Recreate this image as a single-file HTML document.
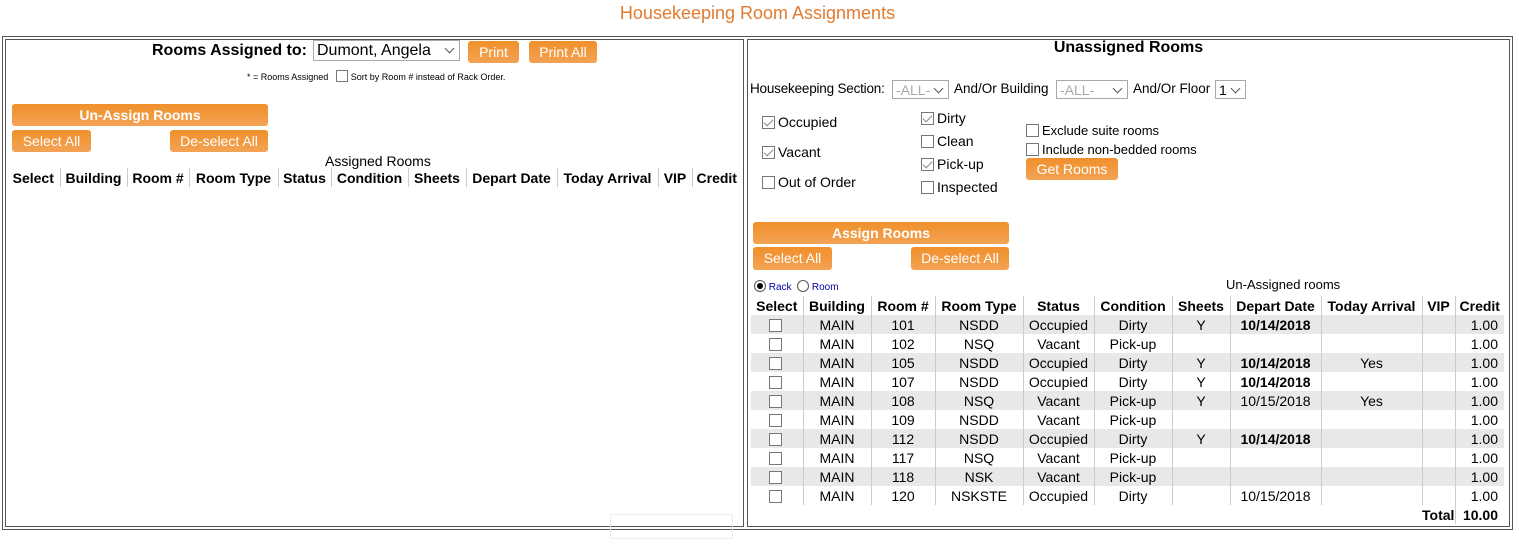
<!DOCTYPE html>
<html><head><meta charset="utf-8"><style>
*{box-sizing:border-box}
body{margin:0;width:1519px;height:545px;background:#fff;font-family:"Liberation Sans",Arial,sans-serif;font-size:14px;color:#000;position:relative;overflow:hidden}
.a{position:absolute;white-space:nowrap}
.btn{position:absolute;background:linear-gradient(#f0902a,#f3a255);color:#fff;border-radius:3px;text-align:center;font-size:14px;line-height:22px}
.sel{position:absolute;border:1px solid #a9a9a9;background:#fff;font-size:14px;padding-left:3px;line-height:18px}
.sel:after{content:"";position:absolute;right:6px;top:4px;width:6px;height:6px;border-right:1px solid #555;border-bottom:1px solid #555;transform:rotate(45deg)}
.cb{display:inline-block;width:13px;height:13px;border:1px solid #777;vertical-align:-2px;margin-right:3px;background:#fff;position:relative}
.cb.k:after{content:"";position:absolute;left:3px;top:0px;width:4px;height:8px;border-right:1px solid #888;border-bottom:1px solid #888;transform:rotate(45deg)}
table{border-collapse:collapse;position:absolute;table-layout:fixed}
td,th{padding:0;text-align:center;height:19px;font-size:14px;border-left:1px solid #ccc;white-space:nowrap}
td:first-child,th:first-child{border-left:none}
tr.g td{background:#e8e8e8}
.r{text-align:right;padding-right:6px}
</style></head><body>
<div class="a" style="left:0;width:1515px;top:3px;text-align:center;color:#e07b2f;font-size:18px">Housekeeping Room Assignments</div>
<div class="a" style="left:2px;top:36px;width:1511px;height:494px;border:1px solid #555"></div>
<div class="a" style="left:5px;top:39px;width:739px;height:488px;border:1px solid #555"></div>
<div class="a" style="left:747px;top:39px;width:763px;height:488px;border:1px solid #555"></div>

<div class="a" style="left:152px;top:42px;font-size:16px;font-weight:bold">Rooms Assigned to:</div>
<div class="sel" style="left:313px;top:40px;width:147px;height:21px;font-size:16px;line-height:19px">Dumont, Angela</div>
<div class="btn" style="left:468px;top:41px;width:51px">Print</div>
<div class="btn" style="left:529px;top:41px;width:68px">Print All</div>
<div class="a" style="left:247px;top:70px;font-size:9px">* = Rooms Assigned &nbsp;&nbsp;<span class="cb" style="width:12px;height:12px"></span>Sort by Room # instead of Rack Order.</div>
<div class="btn" style="left:12px;top:104px;width:256px;font-weight:bold">Un-Assign Rooms</div>
<div class="btn" style="left:12px;top:130px;width:79px">Select All</div>
<div class="btn" style="left:170px;top:130px;width:98px">De-select All</div>
<div class="a" style="left:325px;top:153px">Assigned Rooms</div>
<table style="left:7px;top:168px;width:734px;font-weight:bold"><tr>
<th style="width:53px">Select</th><th style="width:67px">Building</th><th style="width:62px">Room #</th><th style="width:89px">Room Type</th><th style="width:53px">Status</th><th style="width:77px">Condition</th><th style="width:58px">Sheets</th><th style="width:91px">Depart Date</th><th style="width:101px">Today Arrival</th><th style="width:34px">VIP</th><th style="width:49px">Credit</th></tr></table>
<div class="a" style="left:610px;top:514px;width:123px;height:25px;border:1px solid #eee"></div>

<div class="a" style="left:747px;top:38px;width:763px;text-align:center;font-size:16px;font-weight:bold;line-height:20px">Unassigned Rooms</div>
<div class="a" style="left:750px;top:81px;font-size:13.5px;letter-spacing:-0.2px">Housekeeping Section:</div>
<div class="sel" style="left:892px;top:80px;width:57px;height:19px;color:#aaa">-ALL-</div>
<div class="a" style="left:954px;top:81px;font-size:13.5px">And/Or Building</div>
<div class="sel" style="left:1056px;top:80px;width:72px;height:19px;color:#aaa">-ALL-</div>
<div class="a" style="left:1133px;top:81px;font-size:13.5px">And/Or Floor</div>
<div class="sel" style="left:1215px;top:80px;width:31px;height:19px">1</div>
<div class="a" style="left:762px;top:114px"><span class="cb k"></span>Occupied</div>
<div class="a" style="left:762px;top:144px"><span class="cb k"></span>Vacant</div>
<div class="a" style="left:762px;top:174px"><span class="cb"></span>Out of Order</div>
<div class="a" style="left:921px;top:110px"><span class="cb k"></span>Dirty</div>
<div class="a" style="left:921px;top:133px"><span class="cb"></span>Clean</div>
<div class="a" style="left:921px;top:156px"><span class="cb k"></span>Pick-up</div>
<div class="a" style="left:921px;top:179px"><span class="cb"></span>Inspected</div>
<div class="a" style="left:1026px;top:123px;font-size:13px"><span class="cb"></span>Exclude suite rooms</div>
<div class="a" style="left:1026px;top:142px;font-size:13px"><span class="cb"></span>Include non-bedded rooms</div>
<div class="btn" style="left:1026px;top:158px;width:92px">Get Rooms</div>
<div class="btn" style="left:753px;top:222px;width:256px;font-weight:bold">Assign Rooms</div>
<div class="btn" style="left:753px;top:247px;width:79px;height:23px">Select All</div>
<div class="btn" style="left:911px;top:247px;width:98px;height:23px">De-select All</div>
<div class="a" style="left:754px;top:280px;font-size:10px;color:#00a"><span style="display:inline-block;width:12px;height:12px;border:1px solid #555;border-radius:50%;vertical-align:-2px;position:relative"><span style="position:absolute;left:2px;top:2px;width:6px;height:6px;border-radius:50%;background:#000"></span></span> Rack &nbsp;<span style="display:inline-block;width:12px;height:12px;border:1px solid #555;border-radius:50%;vertical-align:-2px"></span> Room</div>
<div class="a" style="left:1226px;top:277px;font-size:13px">Un-Assigned rooms</div>
<table style="left:751px;top:296px;width:753px">
<tr style="font-weight:bold"><th style="width:52px">Select</th><th style="width:68px">Building</th><th style="width:64px">Room #</th><th style="width:88px">Room Type</th><th style="width:71px">Status</th><th style="width:78px">Condition</th><th style="width:58px">Sheets</th><th style="width:91px">Depart Date</th><th style="width:101px">Today Arrival</th><th style="width:33px">VIP</th><th style="width:49px">Credit</th></tr>
<tr class="g"><td><span class="cb"></span></td><td>MAIN</td><td>101</td><td>NSDD</td><td>Occupied</td><td>Dirty</td><td>Y</td><td><b>10/14/2018</b></td><td></td><td></td><td class="r">1.00</td></tr>
<tr><td><span class="cb"></span></td><td>MAIN</td><td>102</td><td>NSQ</td><td>Vacant</td><td>Pick-up</td><td></td><td></td><td></td><td></td><td class="r">1.00</td></tr>
<tr class="g"><td><span class="cb"></span></td><td>MAIN</td><td>105</td><td>NSDD</td><td>Occupied</td><td>Dirty</td><td>Y</td><td><b>10/14/2018</b></td><td>Yes</td><td></td><td class="r">1.00</td></tr>
<tr><td><span class="cb"></span></td><td>MAIN</td><td>107</td><td>NSDD</td><td>Occupied</td><td>Dirty</td><td>Y</td><td><b>10/14/2018</b></td><td></td><td></td><td class="r">1.00</td></tr>
<tr class="g"><td><span class="cb"></span></td><td>MAIN</td><td>108</td><td>NSQ</td><td>Vacant</td><td>Pick-up</td><td>Y</td><td>10/15/2018</td><td>Yes</td><td></td><td class="r">1.00</td></tr>
<tr><td><span class="cb"></span></td><td>MAIN</td><td>109</td><td>NSDD</td><td>Vacant</td><td>Pick-up</td><td></td><td></td><td></td><td></td><td class="r">1.00</td></tr>
<tr class="g"><td><span class="cb"></span></td><td>MAIN</td><td>112</td><td>NSDD</td><td>Occupied</td><td>Dirty</td><td>Y</td><td><b>10/14/2018</b></td><td></td><td></td><td class="r">1.00</td></tr>
<tr><td><span class="cb"></span></td><td>MAIN</td><td>117</td><td>NSQ</td><td>Vacant</td><td>Pick-up</td><td></td><td></td><td></td><td></td><td class="r">1.00</td></tr>
<tr class="g"><td><span class="cb"></span></td><td>MAIN</td><td>118</td><td>NSK</td><td>Vacant</td><td>Pick-up</td><td></td><td></td><td></td><td></td><td class="r">1.00</td></tr>
<tr><td><span class="cb"></span></td><td>MAIN</td><td>120</td><td>NSKSTE</td><td>Occupied</td><td>Dirty</td><td></td><td>10/15/2018</td><td></td><td></td><td class="r">1.00</td></tr>
<tr style="font-weight:bold"><td style="border:none"></td><td style="border:none"></td><td style="border:none"></td><td style="border:none"></td><td style="border:none"></td><td style="border:none"></td><td style="border:none"></td><td style="border:none"></td><td style="border:none"></td><td style="border-left:none">Total</td><td class="r">10.00</td></tr>
</table>
</body></html>
